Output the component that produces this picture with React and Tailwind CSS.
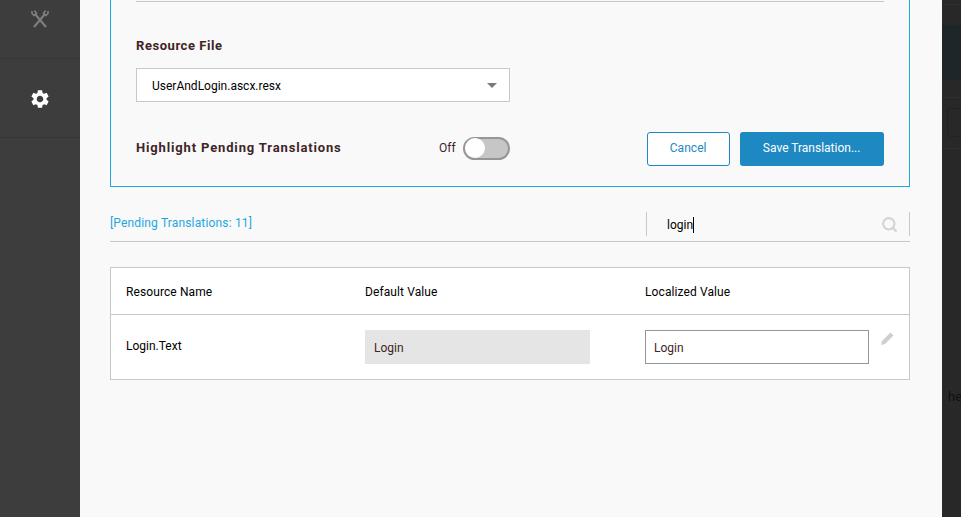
import React from "react";
import { MdSettings } from "react-icons/md";
import { Search } from "lucide-react";

const font = "font-['Roboto','Liberation_Sans',sans-serif]";

const Sidebar = () => (
  <div className="w-20 shrink-0 bg-[#3d3d3d] flex flex-col">
    <div className="h-[59px] border-b border-[#363636] flex items-start justify-center pt-[10px]">
      <svg width="18" height="18" viewBox="0 0 18 18" fill="none" stroke="#808080">
        <path d="M4 4 L15 17 M14 4 L3 17" strokeWidth="2" />
        <path d="M1 1 V3.5 L3 5.5 L5.5 3.5 L3.5 0.5 M17 1 V3.5 L15 5.5 L12.5 3.5 L14.5 0.5" strokeWidth="1.6" />
      </svg>
    </div>
    <div className="h-[79px] pt-[2px] border-b border-[#363636] flex items-center justify-center">
      <MdSettings size={22} color="#ffffff" />
    </div>
  </div>
);

const Backdrop = () => (
  <div className="flex-1 bg-[#282828] overflow-hidden flex flex-col">
    <div className="mt-[4px] h-px bg-[#2f2f2f]" />
    <div className="mt-[20px] h-[55px] bg-[#1f2629]" />
    <div className="mt-[17px] h-px bg-[#2f2f2f]" />
    <div className="mt-[10px] h-[29px] flex">
      <div className="ml-px w-px bg-[#222222]" />
      <div className="ml-[4px] w-[30px] shrink-0 rounded-[3px] border border-[#222222]" />
    </div>
    <div className="mt-[11px] h-px bg-[#2f2f2f]" />
    <div className="mt-[240px] ml-[6px] text-[13px] leading-[16px] text-[#111111]">he</div>
  </div>
);

const App = () => {
  return (
    <div className={`w-[961px] h-[517px] flex overflow-hidden ${font} text-[12px] text-black`}>
      <Sidebar />
      <div className="w-[862px] shrink-0 bg-[#f9f9f9] pl-[30px] pr-[32px]">
        <div className="h-[187px] border border-t-0 border-[#1ea7e0] px-[25px]">
          <div className="h-[2px] border-b border-[#c8c8c8]" />
          <div className="mt-[36px] text-[13px] leading-[16px] font-bold text-[#3e2527] tracking-[0.55px]">Resource File</div>
          <div className="mt-[14px] w-[374px] h-[34px] border border-[#c8c8c8] bg-white flex items-center justify-between pl-[15px] pr-[12px]">
            <span className="pt-[2px]">UserAndLogin.ascx.resx</span>
            <span className="w-0 h-0 border-x-[5px] border-x-transparent border-t-[5px] border-t-[#7a7a7a]" />
          </div>
          <div className="mt-[30px] flex items-center">
            <div className="w-[303px] mb-[2px] text-[13px] font-bold text-[#3e2527] tracking-[0.85px]">Highlight Pending Translations</div>
            <span className="mb-[2px] text-[#3e2527]">Off</span>
            <div className="ml-[7px] mb-[2px] w-[47px] h-[23px] rounded-full bg-[#c6c6c6] border-2 border-[#969696] flex items-center">
              <div className="w-[20px] h-[20px] rounded-full bg-white" />
            </div>
            <button className="ml-[137px] w-[83px] h-[34px] pb-[2px] rounded-[3px] border border-[#1e88c3] bg-white text-[#1e88c3] tracking-[0.05px]">Cancel</button>
            <button className="ml-[10px] w-[144px] h-[34px] pb-[2px] rounded-[3px] bg-[#1e88c3] text-white">Save Translation...</button>
          </div>
        </div>
        <div className="mt-[25px] h-[30px] border-b border-[#c8c8c8] flex items-start">
          <div className="w-[536px] pt-px text-[#1ea7e0] leading-[20px] tracking-[0.16px]">[Pending Translations: 11]</div>
          <div className="flex-1 h-[24px] border-x border-[#c8c8c8] flex items-center justify-between pl-[20px] pr-[11px]">
            <span className="flex items-center pt-[2px]">login<span className="w-px h-[16px] bg-black" /></span>
            <Search size={17} strokeWidth={3} color="#d4d4d4" />
          </div>
        </div>
        <div className="mt-[25px] h-[113px] border border-[#c8c8c8] bg-white">
          <div className="h-[47px] pt-[2px] border-b border-[#c8c8c8] flex items-center tracking-[0.1px]">
            <div className="w-[254px] pl-[15px]">Resource Name</div>
            <div className="w-[280px]">Default Value</div>
            <div>Localized Value</div>
          </div>
          <div className="h-[64px] flex items-start">
            <div className="w-[254px] pl-[15px] mt-[23px] leading-[16px]">Login.Text</div>
            <div className="w-[280px] mt-[15px]">
              <div className="w-[225px] h-[34px] pt-[2px] bg-[#e4e5e4] flex items-center pl-[9px] text-[#3e2527]">Login</div>
            </div>
            <div className="w-[224px] h-[34px] pt-[2px] mt-[15px] border border-[#969696] flex items-center pl-[8px] text-[#3e2527]">Login</div>
            <svg className="ml-[12px] mt-[17px]" width="13" height="13" viewBox="0 0 13 13" fill="#cfcfcf">
              <path d="M0 13 L1 9 L9.5 0.5 L12.5 3.5 L4 12 Z" />
            </svg>
          </div>
        </div>
      </div>
      <Backdrop />
    </div>
  );
};

export default App;
